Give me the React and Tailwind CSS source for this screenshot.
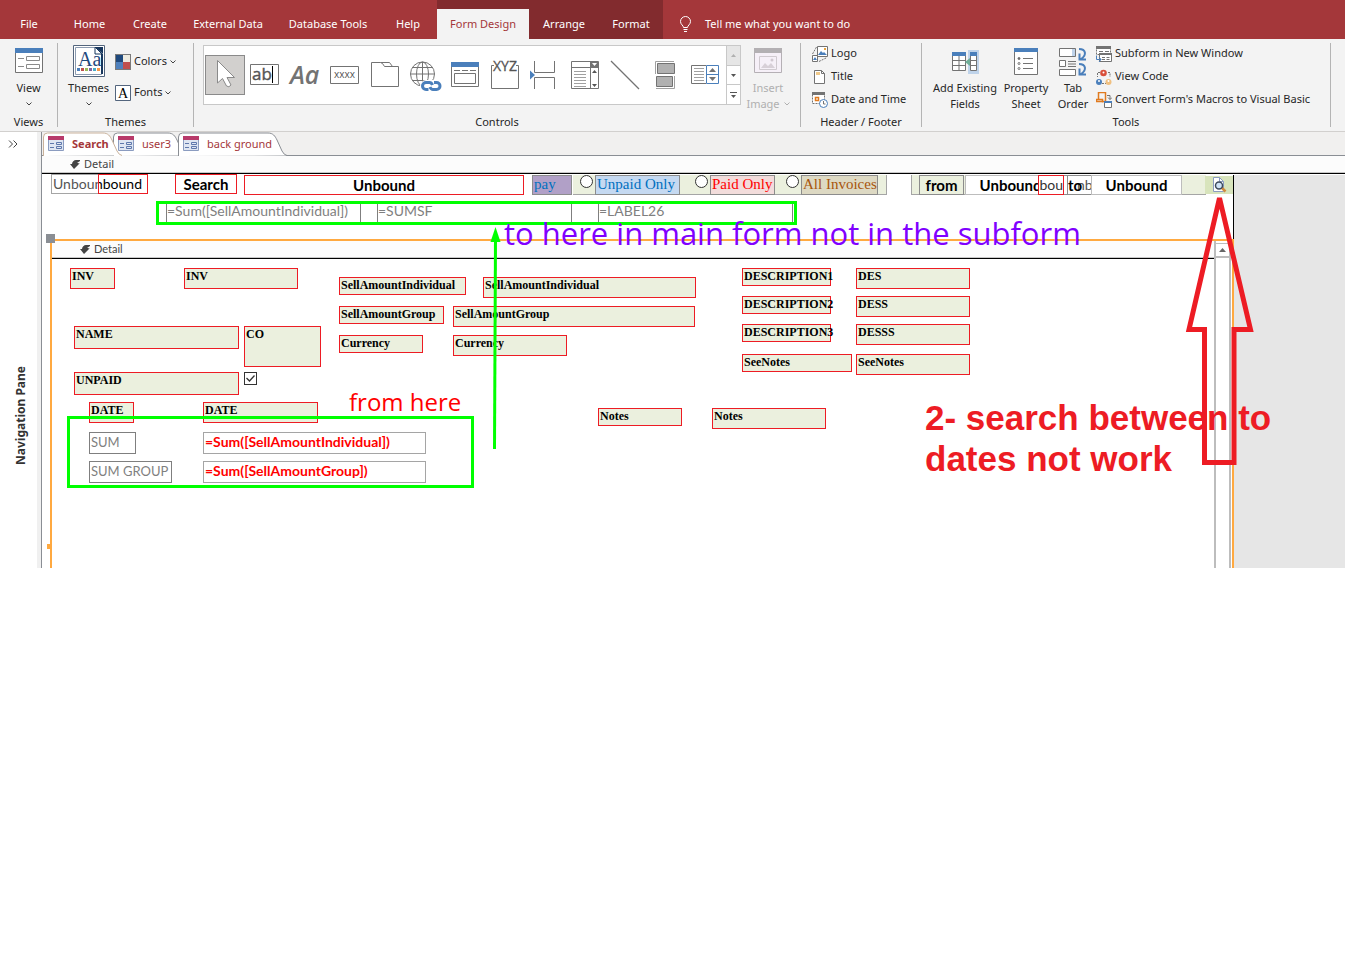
import { useState } from "react";

const mainTabs = [
  { name: "File", width: "w-[58px]" },
  { name: "Home", width: "w-[63px]" },
  { name: "Create", width: "w-[58px]" },
  { name: "External Data", width: "w-[98px]" },
  { name: "Database Tools", width: "w-[102px]" },
  { name: "Help", width: "w-[58px]" },
];

const designTabs = [
  { name: "Form Design", width: "w-[92px]" },
  { name: "Arrange", width: "w-[70px]" },
  { name: "Format", width: "w-[64px]" },
];

// controls on the subform surface
const fieldStyle = "border-[#ed1c24] bg-[#ebf0de] font-['Liberation_Serif',serif] text-[12px] leading-[14px] font-bold text-black";
const sumLabelStyle = "border-[#7f7f7f] font-[Lato,sans-serif] text-[13px] leading-[18px] text-[#7f7f7f]";
const sumBoxStyle = "border-[#a5a5a5] font-[Lato,sans-serif] text-[14px] leading-[20px] font-bold text-[#ff0000]";

const fields = [
  { id: "inv", label: "INV", value: "INV", labelBox: "left-[18px] top-[9px] w-[45px] h-[21px]", valueBox: "left-[132px] top-[9px] w-[114px] h-[21px]" },
  { id: "name", label: "NAME", labelBox: "left-[22px] top-[67px] w-[165px] h-[23px]" },
  { id: "co", label: "CO", labelBox: "left-[192px] top-[67px] w-[77px] h-[41px]" },
  { id: "unpaid", label: "UNPAID", labelBox: "left-[22px] top-[113px] w-[165px] h-[23px]" },
  { id: "date", label: "DATE", value: "DATE", labelBox: "left-[37px] top-[143px] w-[45px] h-[21px]", valueBox: "left-[151px] top-[143px] w-[115px] h-[21px]" },
  { id: "individual", label: "SellAmountIndividual", value: "SellAmountIndividual", labelBox: "left-[287px] top-[18px] w-[127px] h-[18px]", valueBox: "left-[431px] top-[18px] w-[213px] h-[21px]" },
  { id: "group", label: "SellAmountGroup", value: "SellAmountGroup", labelBox: "left-[287px] top-[47px] w-[105px] h-[18px]", valueBox: "left-[401px] top-[47px] w-[242px] h-[21px]" },
  { id: "currency", label: "Currency", value: "Currency", labelBox: "left-[287px] top-[76px] w-[84px] h-[18px]", valueBox: "left-[401px] top-[76px] w-[114px] h-[21px]" },
  { id: "des1", label: "DESCRIPTION1", value: "DES", labelBox: "left-[690px] top-[9px] w-[89px] h-[18px]", valueBox: "left-[804px] top-[9px] w-[114px] h-[21px]" },
  { id: "des2", label: "DESCRIPTION2", value: "DESS", labelBox: "left-[690px] top-[37px] w-[89px] h-[18px]", valueBox: "left-[804px] top-[37px] w-[114px] h-[21px]" },
  { id: "des3", label: "DESCRIPTION3", value: "DESSS", labelBox: "left-[690px] top-[65px] w-[89px] h-[18px]", valueBox: "left-[804px] top-[65px] w-[114px] h-[21px]" },
  { id: "seenotes", label: "SeeNotes", value: "SeeNotes", labelBox: "left-[690px] top-[95px] w-[110px] h-[18px]", valueBox: "left-[804px] top-[95px] w-[114px] h-[21px]" },
  { id: "notes", label: "Notes", value: "Notes", labelBox: "left-[546px] top-[149px] w-[84px] h-[18px]", valueBox: "left-[660px] top-[149px] w-[114px] h-[21px]" },
];

const sums = [
  { id: "sum", label: "SUM", value: "=Sum([SellAmountIndividual])", labelBox: "left-[37px] top-[173px] w-[47px] h-[22px]", valueBox: "left-[151px] top-[173px] w-[223px] h-[22px]" },
  { id: "sumgroup", label: "SUM GROUP", value: "=Sum([SellAmountGroup])", labelBox: "left-[37px] top-[202px] w-[83px] h-[22px]", valueBox: "left-[151px] top-[202px] w-[223px] h-[22px]" },
];

/* ---------- icons ---------- */

function Svg({ w, h, children, className = "" }) {
  return (
    <svg width={w} height={h} viewBox={`0 0 ${w} ${h}`} fill="none" stroke="#737373" className={`shrink-0 ${className}`} aria-hidden="true">
      {children}
    </svg>
  );
}

function Caret({ color = "#444" }) {
  return (
    <Svg w={6} h={4}>
      <path d="M.5.5 3 3 5.5.5" stroke={color} />
    </Svg>
  );
}

const galleryIcons = [
  {
    name: "Select",
    icon: <path d="M12.5 5.5V28l5-4.500 4 7.500q2.500 2 4.500-1l-4-7.500h7.500z" fill="#fff" stroke="#8a8a8a" />,
  },
  {
    name: "Text Box",
    icon: (
      <>
        <path d="M5.500 9.500h28v20h-28z" />
        <text x="7" y="25" fontSize="17" fill="#555" stroke="#555" strokeWidth=".4" fontFamily="Open Sans">ab</text>
        <path d="M27.500 11v17" stroke="#000" />
      </>
    ),
  },
  {
    name: "Label",
    icon: <text x="5" y="29" fontSize="25" fontStyle="italic" fontWeight="600" fill="#737373" stroke="none" fontFamily="Open Sans">Aa</text>,
  },
  {
    name: "Button",
    icon: (
      <>
        <path d="M5.500 11.500h28v17h-28z" />
        <text x="9" y="23" fontSize="10" fill="#555" stroke="none" fontFamily="Open Sans">xxxx</text>
      </>
    ),
  },
  {
    name: "Tab Control",
    icon: <path d="M6.500 7.500h9l2 1 2 3h14v20h-27zM15.500 7.500h9l3 4" />,
  },
  {
    name: "Link",
    icon: (
      <>
        <circle cx="17.500" cy="19" r="12" />
        <ellipse cx="17.500" cy="19" rx="6" ry="12" />
        <path d="M17.500 7v24M5.500 19h24M7 12.500h21M7 25.500h21" />
        <rect x="15" y="25" width="22" height="12" rx="6" fill="#fff" stroke="none" />
        <path d="M23.500 34.500H21a3.500 3.500 0 0 1 0-7h3.500q2 0 3 2.500M29 27.500h2.500a3.500 3.500 0 0 1 0 7H28q-2 0-3-2.500" stroke="#4a7fbb" strokeWidth="3" />
      </>
    ),
  },
  {
    name: "Navigation Control",
    icon: (
      <>
        <path d="M6.500 8.500h27v23h-27z" />
        <path d="M6 7h28v5H6z" fill="#4a7fbb" stroke="none" />
        <path d="M9 15.500h6M17 15.500h6M25 15.500h6M9.500 18.500h21v10h-21z" />
      </>
    ),
  },
  {
    name: "Option Group",
    icon: (
      <>
        <path d="M9 10.500H6.500v23h27v-23H31" />
        <text x="8" y="16" fontSize="14" fill="#555" stroke="#555" strokeWidth=".3" fontFamily="Open Sans">XYZ</text>
      </>
    ),
  },
  {
    name: "Page Break",
    icon: (
      <>
        <path d="M9.500 6v11.500h20V6M9.500 34V22.500h20V34" />
        <path d="M5 15.500 10 20l-5 4.500z" fill="#4a7fbb" stroke="none" />
      </>
    ),
  },
  {
    name: "Combo Box",
    icon: (
      <>
        <path d="M6.500 6.500h27v27h-27zM6.500 12.500h27M25.500 6.500v27" />
        <path d="M26 7h7v5h-7z" fill="#737373" stroke="none" />
        <path d="M27 8h5l-2.500 3z" fill="#fff" stroke="none" />
        <path d="M9 16.500h12M9 19.500h12M9 22.500h12M9 25.500h12M9 28.500h12M9 31.500h12" stroke="#a0a0a0" />
        <path d="M27 18h5l-2.500-3zM27 29h5l-2.500 3z" fill="#555" stroke="none" />
      </>
    ),
  },
  { name: "Line", icon: <path d="m6 6 28 28" strokeWidth="1.300" /> },
  {
    name: "Toggle Button",
    icon: (
      <>
        <path d="M10.500 19V6.500H29M11 33.500h18.500V21" stroke="#a0a0a0" />
        <path d="M12.500 8.500h17v10h-17zM11.500 21.500h16v10h-16z" fill="#b1b1b1" />
      </>
    ),
  },
  {
    name: "List Box",
    icon: (
      <>
        <path d="M21 10.500H6.500v18H21" />
        <path d="M9 13.500h10M9 16.500h10M9 19.500h10M9 22.500h10M9 25.500h10" stroke="#a0a0a0" />
        <path d="M21.500 10.500h12v18h-12zM21.500 19.500h12" stroke="#4a7fbb" />
        <path d="M24 17h7l-3.500-4zM24 22h7l-3.500 4z" fill="#737373" stroke="none" />
      </>
    ),
  },
];

const viewIcon = (
  <Svg w={28} h={26}>
    <path d="M.5 1.500h27v23H.5z" fill="#fff" />
    <path d="M0 0h28v5H0z" fill="#4a7fbb" stroke="none" />
    <path d="M3 10.500h6M3 18.500h6M11.500 8.500h13v4h-13zM11.500 16.500h13v4h-13z" stroke="#8a8a8a" />
  </Svg>
);

const themesIcon = (
  <Svg w={32} h={32}>
    <path d="M.5.500h31v31H.5z" fill="#fff" stroke="#53657d" />
    <path d="M2.500 2.500h19l7 7v20h-26z" stroke="#8c9bb0" />
    <path d="M28 9h2v20h-2zM22 2h8v7z" fill="#17365d" stroke="none" />
    <path d="M22 2v7h7z" fill="#fff" stroke="#17365d" />
    <text x="5" y="21" fontSize="20" fill="#1f497d" stroke="none" fontFamily="Liberation Serif">Aa</text>
    <path d="M4 23h3v3H4z" fill="#4a7fbb" stroke="none" />
    <path d="M8 23h3v3H8z" fill="#c0504d" stroke="none" />
    <path d="M12 23h3v3h-3z" fill="#9bbb59" stroke="none" />
    <path d="M16 23h3v3h-3z" fill="#8064a2" stroke="none" />
    <path d="M20 23h3v3h-3z" fill="#4bacc6" stroke="none" />
    <path d="M24 23h3v3h-3z" fill="#f79646" stroke="none" />
  </Svg>
);

const colorsIcon = (
  <Svg w={16} h={16}>
    <path d="M0 0h16v16H0z" fill="#7a7a7a" stroke="none" />
    <path d="M1 1h7v7H1z" fill="#1f497d" stroke="none" />
    <path d="M8 1h7v7H8z" fill="#eeece1" stroke="none" />
    <path d="M1 8h7v7H1z" fill="#4f81bd" stroke="none" />
    <path d="M8 8h7v7H8z" fill="#c0504d" stroke="none" />
  </Svg>
);

const fontsIcon = (
  <Svg w={16} h={16}>
    <path d="M.5.500h15v15H.5z" fill="#fff" stroke="#53657d" />
    <text x="3" y="13" fontSize="14" fill="#000" stroke="none" fontFamily="Liberation Serif">A</text>
  </Svg>
);

const insertImageIcon = (
  <Svg w={28} h={25}>
    <path d="M.5.500h27v24H.5z" fill="#f6f0f8" stroke="#b5b0b5" />
    <path d="M0 0h28v5H0z" fill="#b3b0b3" stroke="none" />
    <path d="M5.500 8.500h17v13h-17z" stroke="#d0cad0" />
    <path d="m7 20 4-5 3 3 3-3 4 5z" fill="#d8d0d8" stroke="none" />
    <circle cx="18" cy="12" r="1.500" fill="#d0c8d0" stroke="none" />
  </Svg>
);

const logoIcon = (
  <Svg w={16} h={16}>
    <path d="M5.500.500h10v10h-10z" fill="#fff" />
    <path d="m6 9 3-4 2 2 1-1 3 3z" fill="#4a7fbb" stroke="none" />
    <path d="M12 2h2v2h-2z" fill="#e8a33d" stroke="none" />
    <path d="M.5 9.500h5v6h-5z" fill="#fff" />
    <path d="m1 14 2-3 2 3z" fill="#4a7fbb" stroke="none" />
    <path d="m.5 8 4-7M7 15.500l8-4" strokeDasharray="2 1" />
  </Svg>
);

const titleIcon = (
  <Svg w={16} h={16}>
    <path d="M2.500 1.500h7l3 3v10h-10z" fill="#fff" />
    <path d="M9.500 1.500v3h3" />
    <path d="M4 3h4v3H4z" fill="#f0c98a" stroke="none" />
  </Svg>
);

const dateIcon = (
  <Svg w={16} h={16}>
    <path d="M.5.500h12v11H.5z" fill="#fff" strokeDasharray="2 1" />
    <path d="M0 0h13v3H0z" fill="#737373" stroke="none" />
    <path d="M3.500 5.500h3v3h-3z" stroke="#e07a1f" strokeWidth="1.500" />
    <circle cx="11.500" cy="11.500" r="4" fill="#fff" stroke="#4a7fbb" />
    <path d="M11.500 9v3h2" />
  </Svg>
);

const addFieldsIcon = (
  <Svg w={28} h={24}>
    <path d="M17 0h11v24H17z" fill="#bfd3ea" stroke="none" />
    <path d="M1.500 2.500h13v18h-13zM1.500 10.500h13M1.500 15.500h13M8 5v15M19.500 2.500h6v18h-6zM19.500 10.500h6M19.500 15.500h6" fill="#fff" />
    <path d="M1 2h14v4H1zM19 2h7v4h-7z" fill="#4a7fbb" stroke="none" />
    <path d="m19 8-5 4 5 4z" fill="#6fae98" stroke="none" />
  </Svg>
);

const propertyIcon = (
  <Svg w={24} h={28}>
    <path d="M.5.500h23v26H.5z" fill="#fff" />
    <path d="M0 0h24v4H0z" fill="#4a7fbb" stroke="none" />
    <path d="M9 10.500h10M9 15.500h10M9 20.500h10" />
    <circle cx="5" cy="10.500" r="1" fill="#555" />
    <circle cx="5" cy="15.500" r="1" />
    <circle cx="5" cy="20.500" r="1" />
  </Svg>
);

const tabOrderIcon = (
  <Svg w={28} h={29}>
    <path d="M.5 1.500h16v8H.5zM.5 13.500h6v6h-6zM.5 22.500h16v6H.5z" fill="#fff" />
    <path d="M13 2h3v7h-3z" fill="#bfd3ea" stroke="none" />
    <path d="M9 14.500h8M9 17h8M9 19.500h8" />
    <path d="M20 2c7 0 8 6 2 10M27 12.500h-6.500V6.500M20 17c7 0 8 6 2 10M27 27.500h-6.500V21.500" stroke="#4a7fbb" strokeWidth="2" />
  </Svg>
);

const subformIcon = (
  <Svg w={16} h={16}>
    <path d="M.5.500h14v8H.5z" fill="#fff" strokeDasharray="2 1" />
    <path d="M0 0h15v3H0z" fill="#737373" stroke="none" />
    <path d="M3.500 7.500h12v8h-12z" fill="#fff" />
    <path d="M3 7h13v2H3z" fill="#737373" stroke="none" />
    <path d="M3 5.500h4M9 5.500h4M6 11.500h3M6 13.500h3M10.500 11.500h3M10.500 13.500h3" />
    <path d="M.5 9.500v4H5M3 11l2 2.500L3 16" stroke="#4a7fbb" />
  </Svg>
);

const codeIcon = (
  <Svg w={16} h={16}>
    <path d="M4 3.500H1.500V8M12 3.500h2V8M6 14.500h4" strokeDasharray="2 1" />
    <circle cx="7.500" cy="4" r="3.300" fill="#d94f3a" stroke="none" />
    <circle cx="3" cy="13" r="3" fill="#4a7fbb" stroke="none" />
    <circle cx="12.500" cy="13" r="3" fill="#f0c080" stroke="none" />
    <circle cx="7.500" cy="3.500" r="1" fill="#fff" stroke="none" />
    <circle cx="3" cy="12" r="1" fill="#fff" stroke="none" />
    <circle cx="12.500" cy="12" r="1" fill="#fff" stroke="none" />
  </Svg>
);

const macroIcon = (
  <Svg w={16} h={16}>
    <path d="M2.500 8V.500h7V9.500h-9v-2h6v3" stroke="#e07a1f" strokeWidth="1.500" />
    <path d="M11 3.500h3v4M12 5.500l2 2 2-2" />
    <path d="M8.500 9.500h7v6h-7z" fill="#fff" />
    <path d="M8 9h8v2H8z" fill="#4a7fbb" stroke="none" />
  </Svg>
);

const formIcon = (
  <Svg w={16} h={16}>
    <path d="M.5.500h15v14H.5z" fill="#dfe6f2" stroke="#8b9cc0" />
    <path d="M0 0h16v4H0z" fill="#b83a6a" stroke="none" />
    <path d="M2 7.500h4M2 11.500h4M8.500 6.500h5v2h-5zM8.500 10.500h5v2h-5z" stroke="#5f78ac" />
  </Svg>
);

/* ---------- ribbon parts ---------- */

function RibbonGroup({ title, className, children }) {
  return (
    <section className={`my-1 flex flex-col border-r border-[#b4b4b4] ${className}`}>
      <div className="flex flex-1">{children}</div>
      <h2 className="h-[11px] text-center leading-[12px]">{title}</h2>
    </section>
  );
}

function SmallButton({ icon, children, caret }) {
  return (
    <button className="flex h-[23px] items-center gap-[3px] whitespace-nowrap">
      {icon}
      {children}
      {caret && <Caret />}
    </button>
  );
}

function BigButton({ icon, lines, className = "" }) {
  return (
    <button className={`flex flex-col items-center justify-start ${className}`}>
      <span className="flex h-[37px] items-center">{icon}</span>
      {lines.map((line) => (
        <span key={line} className="leading-4 whitespace-nowrap">{line}</span>
      ))}
    </button>
  );
}

function Ribbon() {
  const [tool, setTool] = useState("Select");

  return (
    <div className="flex h-[93px] border-b border-[#d2d0ce] bg-[#f3f3f3] text-[#262626]">
      <RibbonGroup title="Views" className="w-[58px]">
        <button className="flex flex-1 flex-col items-center justify-start pt-[5px]">
          {viewIcon}
          <span className="mt-[6px] mb-[6px] leading-4">View</span>
          <Caret />
        </button>
      </RibbonGroup>

      <RibbonGroup title="Themes" className="w-[136px]">
        <button className="flex w-[61px] flex-col items-center justify-start pt-[2px]">
          {themesIcon}
          <span className="mt-[3px] mb-[6px] leading-4">Themes</span>
          <Caret />
        </button>
        <div className="ml-[-4px] flex flex-col gap-2 pt-[7px]">
          <SmallButton icon={colorsIcon} caret>Colors</SmallButton>
          <SmallButton icon={fontsIcon} caret>Fonts</SmallButton>
        </div>
      </RibbonGroup>

      <RibbonGroup title="Controls" className="w-[607px]">
        <div className="mt-[2px] ml-[9px] flex h-[60px] w-[538px] border border-[#c8c8c8] bg-white">
          <div className="flex flex-1 items-center pl-px">
            {galleryIcons.map((item) => (
              <button
                key={item.name}
                title={item.name}
                onClick={() => setTool(item.name)}
                className={item.name === tool ? "size-10 bg-[#d2d0ce] outline -outline-offset-1 outline-[#8a8a8a]" : "size-10"}
              >
                <Svg w={40} h={40}>{item.icon}</Svg>
              </button>
            ))}
          </div>
          <div className="flex w-[14px] flex-col divide-y divide-[#c8c8c8] border-l border-[#c8c8c8]">
            <button title="Row up" className="flex flex-1 items-center justify-center bg-[#e6e6e6]">
              <Svg w={5} h={3}><path d="M0 3h5L2.500 0z" fill="#b0b0b0" stroke="none" /></Svg>
            </button>
            <button title="Row down" className="flex flex-1 items-center justify-center">
              <Svg w={5} h={3}><path d="M0 0h5L2.500 3z" fill="#555" stroke="none" /></Svg>
            </button>
            <button title="More" className="flex flex-1 items-center justify-center">
              <Svg w={7} h={6}><path d="M0 .5h7" stroke="#555" /><path d="M1 3h5L3.500 6z" fill="#555" stroke="none" /></Svg>
            </button>
          </div>
        </div>
        <button disabled className="flex w-[54px] flex-col items-center justify-start pt-[5px] text-[#b0b0b0]">
          {insertImageIcon}
          <span className="mt-[7px] leading-4">Insert</span>
          <span className="flex items-center gap-1 leading-4">Image <Caret color="#b0b0b0" /></span>
        </button>
      </RibbonGroup>

      <RibbonGroup title="Header / Footer" className="w-[121px]">
        <div className="-mt-px flex flex-col pl-[11px]">
          <SmallButton icon={logoIcon}>Logo</SmallButton>
          <SmallButton icon={titleIcon}>Title</SmallButton>
          <SmallButton icon={dateIcon}>Date and Time</SmallButton>
        </div>
      </RibbonGroup>

      <RibbonGroup title="Tools" className="w-[409px]">
        <BigButton icon={addFieldsIcon} lines={["Add Existing", "Fields"]} className="ml-[6px] w-[74px]" />
        <BigButton icon={propertyIcon} lines={["Property", "Sheet"]} className="w-[48px]" />
        <BigButton icon={tabOrderIcon} lines={["Tab", "Order"]} className="w-[46px]" />
        <div className="-mt-px flex flex-col">
          <SmallButton icon={subformIcon}>Subform in New Window</SmallButton>
          <SmallButton icon={codeIcon}>View Code</SmallButton>
          <SmallButton icon={macroIcon}>Convert Form's Macros to Visual Basic</SmallButton>
        </div>
      </RibbonGroup>
    </div>
  );
}

function TopBar() {
  return (
    <nav className="flex h-[39px] bg-[#a4373a] text-white">
      {mainTabs.map((tab) => (
        <button key={tab.name} className={`mt-[9px] whitespace-nowrap ${tab.width}`}>{tab.name}</button>
      ))}
      <div className="flex bg-[#822b2e] pt-[9px]">
        {designTabs.map((tab, i) => (
          <button key={tab.name} className={`whitespace-nowrap ${tab.width} ${i === 0 ? "bg-[#f3f3f3] text-[#a4373a]" : ""}`}>
            {tab.name}
          </button>
        ))}
      </div>
      <button className="mt-[9px] ml-4 flex items-center gap-[13px] whitespace-nowrap">
        <Svg w={13} h={17}>
          <path d="M4.500 11.500c0-2-3-3-3-6a5 5 0 0 1 10 0c0 3-3 4-3 6zM4.500 13.500h4M5 15.500h3" stroke="#fff" />
        </Svg>
        Tell me what you want to do
      </button>
    </nav>
  );
}

/* ---------- document area ---------- */

function DocTabs() {
  const tabs = [
    { name: "Search", width: "w-[70px] z-10 font-bold", path: "M.5 24V5q0-4 4-4H60c5 0 7 3 9 7l5 11q2 4 5 4.500", stroke: "#c9b29b" },
    { name: "user3", width: "w-[65px]", path: "M.5 24V5q0-4 4-4H55c5 0 7 3 9 7l5 11q2 4 5 4.500", stroke: "#8a8e94" },
    { name: "back ground", width: "w-[112px]", path: "M.5 24V5q0-4 4-4H90c5 0 7 3 9 7l5 11q2 4 5 4.500", stroke: "#8a8e94" },
  ];

  return (
    <div className="flex h-6 bg-[#f1f0ef] pl-px text-[#a4373a] shadow-[inset_0_-1px_0_#8a8e94]">
      {tabs.map((tab) => (
        <button key={tab.name} className={`relative flex items-center whitespace-nowrap ${tab.width}`}>
          <svg width="112" height="24" className="absolute inset-0" aria-hidden="true">
            <path d={tab.path} fill="#fff" stroke={tab.stroke} />
          </svg>
          <span className="relative flex items-center gap-2 pl-[5px]">{formIcon}{tab.name}</span>
        </button>
      ))}
    </div>
  );
}

function DetailBar({ className }) {
  return (
    <div className={`flex items-center gap-1 border-b border-black bg-[#fcfcfc] text-[#444] shadow-[inset_0_-1px_0_#c8c8c8] ${className}`}>
      <Svg w={10} h={9}>
        <path d="M10 0H6C4 0 2 2 2 4H0l4 5 5-5H8L10 3H7l3-2z" fill="#444" stroke="none" />
      </Svg>
      <span>Detail</span>
    </div>
  );
}

function FieldPair({ field, labelStyle, valueStyle }) {
  return (
    <>
      <label htmlFor={field.id} className={`absolute border px-px whitespace-nowrap ${labelStyle} ${field.labelBox}`}>
        {field.label}
      </label>
      {field.value && (
        <input
          id={field.id}
          readOnly
          value={field.value}
          className={`absolute border px-px pb-1 ${valueStyle} ${field.valueBox}`}
        />
      )}
    </>
  );
}

function Subform() {
  return (
    <div className="absolute top-16 right-[-1px] bottom-0 left-2 flex border-2 border-b-0 border-[#ffa940] bg-white">
      <div className="relative flex-1">
        <DetailBar className="h-[18px] pl-7" />
        <div className="relative">
          {fields.map((field) => (
            <FieldPair key={field.id} field={field} labelStyle={fieldStyle} valueStyle={fieldStyle} />
          ))}
          <input
            type="checkbox"
            aria-label="CO"
            defaultChecked
            className="peer absolute top-[113px] left-[192px] size-[13px] appearance-none border border-[#333] bg-white"
          />
          <svg width="13" height="13" className="pointer-events-none absolute top-[113px] left-[192px] hidden peer-checked:block" aria-hidden="true">
            <path d="m2.500 6 3 3 5-5.500" fill="none" stroke="#333" strokeWidth="1.300" />
          </svg>
          {sums.map((field) => (
            <FieldPair key={field.id} field={field} labelStyle={sumLabelStyle} valueStyle={sumBoxStyle} />
          ))}
        </div>
      </div>
      <div className="mr-px flex w-[17px] flex-col border-x-2 border-[#bdbdbd] bg-white">
        <button title="Scroll up" className="mt-[2px] flex h-[15px] items-center justify-center border-t border-b-2 border-[#bdbdbd]">
          <Svg w={7} h={4}><path d="M0 4h7L3.500 0z" fill="#666" stroke="none" /></Svg>
        </button>
      </div>
      <span className="absolute top-[-7px] left-[-6px] size-[9px] bg-[#8a8e94]" />
      <span className="absolute top-[303px] left-[-5px] h-[5px] w-[3px] bg-[#ffa940]" />
    </div>
  );
}

function MainForm() {
  const boxText = "absolute border overflow-hidden whitespace-nowrap text-center text-[15px] font-bold text-black";
  const optionText = "absolute top-0 h-5 border border-[#8c8c8c] pl-px font-['Liberation_Serif',serif] text-[15px] leading-[17px] whitespace-nowrap";
  const radio = "absolute top-0 size-[13px] appearance-none rounded-full border border-[#333] bg-white checked:border-4";
  const formula = "absolute top-[27px] h-[20px] w-[195px] border-x border-[#7f7f7f] pb-[3px] text-[14px] text-[#7f7f7f]";

  return (
    <div className="relative w-[1192px] border-r border-black bg-white font-[Lato,sans-serif]">
      <input readOnly aria-label="Key" value="Unbound" className="absolute top-[-1px] left-[9px] h-5 w-[48px] border border-[#a5a5a5] pb-px pl-px text-[14px] text-[#555]" />
      <div className="absolute top-[-1px] left-[56px] flex h-5 w-[50px] justify-end overflow-hidden border border-[#ed1c24] pr-[5px] text-[14px] leading-[17px] text-black">
        <span>Unbound</span>
      </div>
      <label htmlFor="search" className={`${boxText} top-[-1px] left-[133px] h-5 w-[62px] border-[#ed1c24] leading-[18px]`}>Search</label>
      <input id="search" readOnly value="Unbound" className={`${boxText} top-0 left-[202px] h-5 w-[280px] border-[#ed1c24]`} />

      <span className={`${optionText} left-[490px] w-10 bg-[#b1a0c7] text-[#0070c0]`}>pay</span>
      <div className="absolute top-0 left-[531px] h-5 w-[314px] border-r border-b border-[#a5a5a5] bg-[#ebf0de]">
        <input type="radio" name="pay" id="unpaidOnly" className={`${radio} left-[7px]`} />
        <label htmlFor="unpaidOnly" className={`${optionText} left-[22px] w-[85px] bg-[#c5d9f1] text-[#0070c0]`}>Unpaid Only</label>
        <input type="radio" name="pay" id="paidOnly" className={`${radio} left-[122px]`} />
        <label htmlFor="paidOnly" className={`${optionText} left-[137px] w-[65px] bg-[#f2dcdb] text-[#ff0000]`}>Paid Only</label>
        <input type="radio" name="pay" id="allInvoices" className={`${radio} left-[213px]`} />
        <label htmlFor="allInvoices" className={`${optionText} left-[228px] w-[77px] bg-[#ddd9c3] text-[#a8550c]`}>All Invoices</label>
      </div>

      <div className="absolute top-0 left-[869px] h-5 w-[295px] border-b border-l border-[#a5a5a5] bg-[#ebf0de]">
        <label htmlFor="fromDate" className={`${boxText} top-0 left-[7px] h-5 w-[45px] border-[#8c8c8c] leading-[18px]`}>from</label>
        <input id="fromDate" readOnly value="Unbound" className={`${boxText} top-0 left-[53px] h-5 w-[91px] border-[#bdbdbd] bg-white`} />
        <div className="absolute top-0 left-[151px] h-5 w-[29px] overflow-hidden border border-[#8c8c8c] bg-white pl-[13px] text-[14px] leading-[17px] text-[#555]">
          nb
        </div>
        <div className="absolute top-0 left-[126px] flex h-5 w-[26px] justify-end overflow-hidden border border-[#ed1c24] bg-white text-[14px] leading-[17px] text-[#333]">
          <span>nbou</span>
        </div>
        <label htmlFor="toDate" className={`${boxText} top-0 left-[155px] h-5 w-[22px] border-y-0 border-r-0 border-[#8c8c8c] text-left leading-[20px]`}>to</label>
        <input id="toDate" readOnly value="Unbound" className={`${boxText} top-0 left-[179px] h-5 w-[91px] border-[#bdbdbd] bg-white`} />
      </div>
      <button title="Search dates" className="absolute top-px left-[1163px] flex h-[18px] w-7 items-center justify-center bg-[#d8e4bc]">
        <Svg w={16} h={16}>
          <path d="M2.500.500h6l4 4v10h-10z" fill="#fff" stroke="#8b9cc0" />
          <path d="M8.500.500v4h4" stroke="#8b9cc0" />
          <path d="m10.500 10.500 4 4" stroke="#d08a3c" strokeWidth="2.500" />
          <circle cx="8" cy="8.500" r="3.500" fill="#cfe3f7" stroke="#3d4a5c" strokeWidth="1.500" />
        </Svg>
      </button>

      <input readOnly aria-label="Individual total" value="=Sum([SellAmountIndividual])" className={`${formula} left-[124px]`} />
      <input readOnly aria-label="Group total" value="=SUMSF" className={`${formula} left-[335px]`} />
      <input readOnly aria-label="Label total" value="=LABEL26" className={`${formula} left-[556px]`} />

      <Subform />
    </div>
  );
}

// hand-drawn notes laid over the designer
function Notes() {
  return (
    <div className="pointer-events-none absolute inset-0">
      <svg width="1345" height="568" fill="none" className="absolute inset-0" aria-hidden="true">
        <g stroke="#00ff00" strokeWidth="3">
          <rect x="157.500" y="202.500" width="638" height="21" />
          <rect x="68.500" y="417.500" width="404" height="69" />
          <path d="M494.500 449 495.500 238" />
          <path d="m495.500 227 5 15h-10z" fill="#00ff00" stroke="none" />
        </g>
        <path d="m1219.500 198 31 131.500H1234V462.500h-29.500V329.500H1189z" stroke="#ed1c24" strokeWidth="5" />
      </svg>
      <p className="absolute top-[211px] left-[504px] font-['Open_Sans',sans-serif] text-[31px] leading-[44px] whitespace-nowrap text-[#8000ff]">
        to here in main form not in the subform
      </p>
      <p className="absolute top-[386px] left-[349px] font-['Open_Sans',sans-serif] text-[24px] leading-8 whitespace-nowrap text-[#ff0000]">
        from here
      </p>
      <p className="absolute top-[397px] left-[925px] w-[370px] font-['Liberation_Sans',sans-serif] text-[35px] leading-[41px] font-bold text-[#ed1c24]">
        2- search between to dates not work
      </p>
    </div>
  );
}

export default function App() {
  return (
    <div className="min-h-screen bg-white font-['Noto_Sans',sans-serif] text-[11px]">
      <div className="relative overflow-hidden">
        <TopBar />
        <Ribbon />
        <div className="flex h-[436px]">
          <aside className="flex w-[42px] shrink-0 flex-col items-center border-r border-[#8a8e94] bg-white shadow-[inset_-4px_0_0_#f0f0f0]">
            <button title="Open navigation pane" className="mt-2 -ml-4">
              <Svg w={10} h={8}><path d="m1 .5 3.500 3.500L1 7.500M5.500.500 9 4 5.500 7.500" stroke="#444" /></Svg>
            </button>
            <span className="mt-[218px] rotate-180 text-[12px] font-bold whitespace-nowrap text-[#333] [writing-mode:vertical-rl]">Navigation Pane</span>
          </aside>
          <main className="flex min-w-0 flex-1 flex-col">
            <DocTabs />
            <DetailBar className="h-[18px] pl-7" />
            <div className="mt-px flex flex-1 bg-[#e6e6e6]">
              <MainForm />
            </div>
          </main>
        </div>
        <Notes />
      </div>
    </div>
  );
}
